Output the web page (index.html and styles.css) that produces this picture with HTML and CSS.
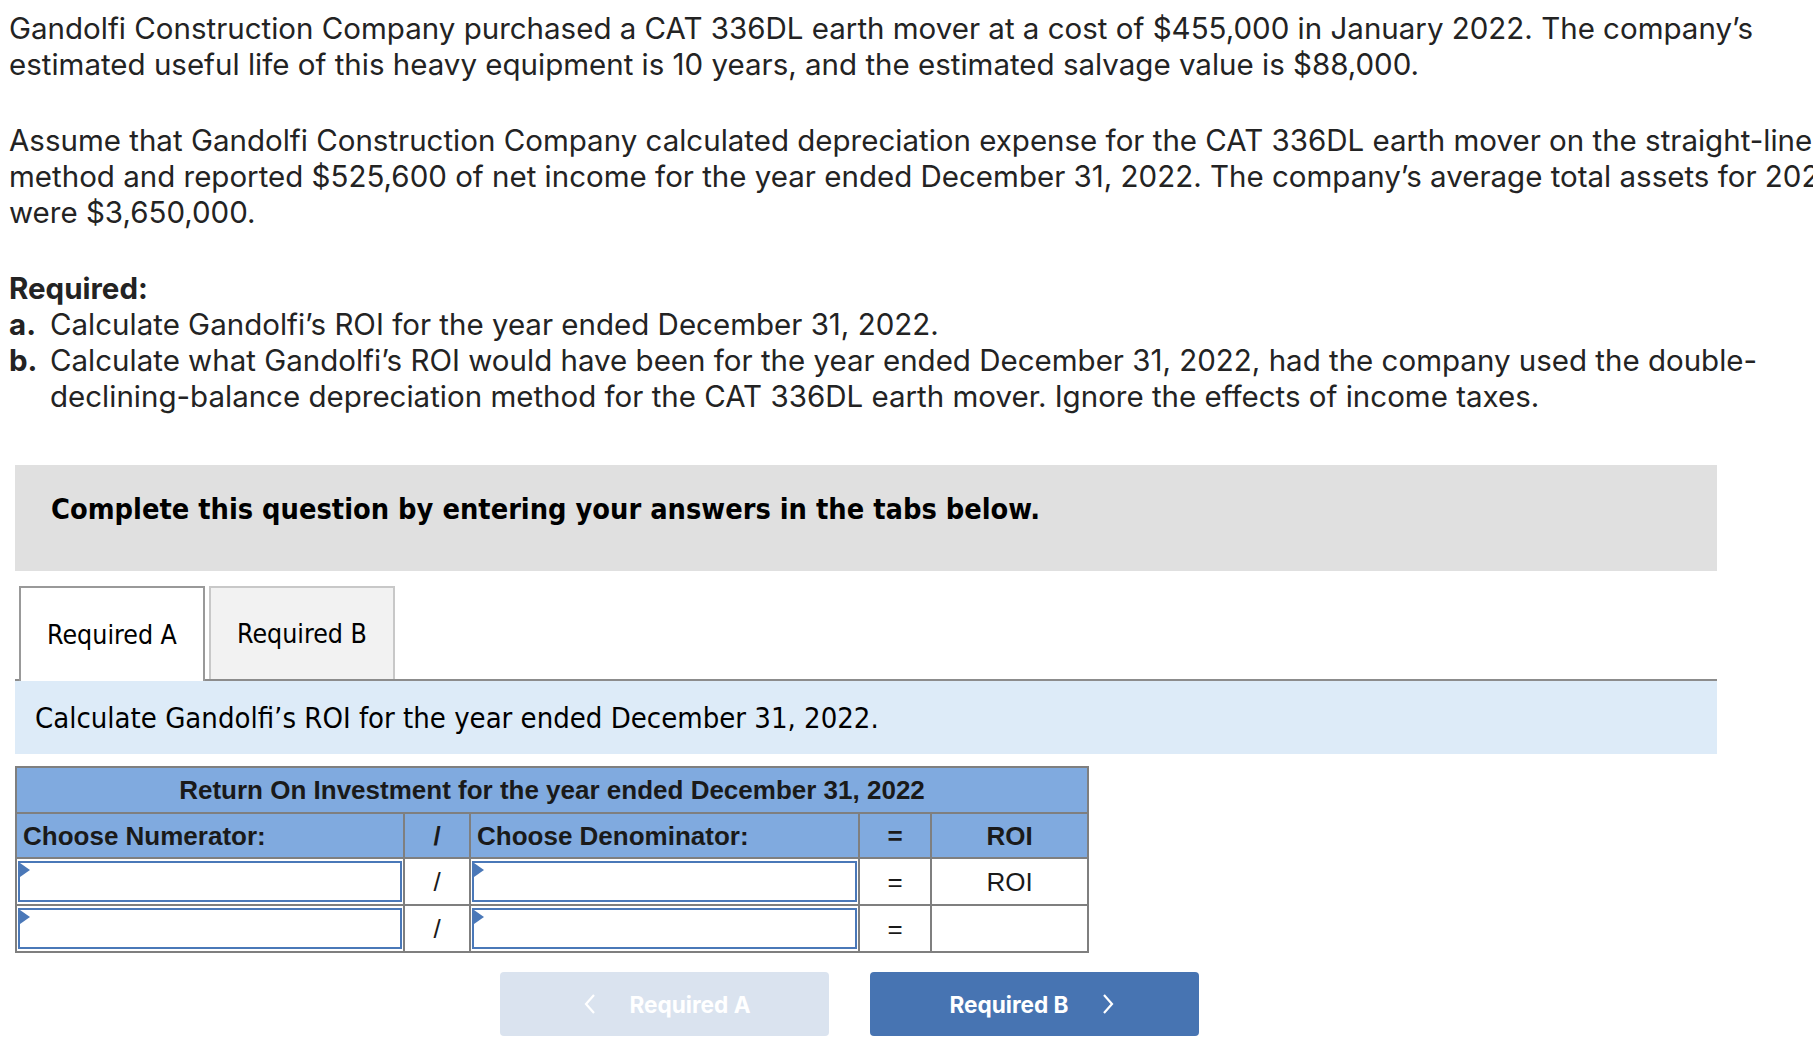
FILE: index.html
```html
<!DOCTYPE html>
<html lang="en">
<head>
<meta charset="utf-8">
<title>ROI question</title>
<link rel="stylesheet" href="styles.css">
</head>
<body>
<div class="page">
  <section class="question">
    <p class="para">Gandolfi Construction Company purchased a CAT 336DL earth mover at a cost of $455,000 in January 2022. The company’s estimated useful life of this heavy equipment is 10 years, and the estimated salvage value is $88,000.</p>
    <p class="para">Assume that Gandolfi Construction Company calculated depreciation expense for the CAT 336DL earth mover on the straight-line method and reported $525,600 of net income for the year ended December 31, 2022. The company’s average total assets for 2022 were $3,650,000.</p>
    <p class="req-title">Required:</p>
    <ul class="req-list">
      <li><span class="lbl">a.</span><span>Calculate Gandolfi’s ROI for the year ended December 31, 2022.</span></li>
      <li><span class="lbl">b.</span><span>Calculate what Gandolfi’s ROI would have been for the year ended December 31, 2022, had the company used the double-declining-balance depreciation method for the CAT 336DL earth mover. Ignore the effects of income taxes.</span></li>
    </ul>
  </section>

  <section class="work">
    <div class="instructions">Complete this question by entering your answers in the tabs below.</div>

    <div class="tabs">
      <div class="tab tab-active">Required A</div>
      <div class="tab tab-idle">Required B</div>
    </div>

    <div class="tab-desc">Calculate Gandolfi’s ROI for the year ended December 31, 2022.</div>

    <table class="roi">
      <colgroup>
        <col class="c-num"><col class="c-op"><col class="c-den"><col class="c-eq"><col class="c-roi">
      </colgroup>
      <tr class="row-title"><th colspan="5">Return On Investment for the year ended December 31, 2022</th></tr>
      <tr class="row-head">
        <th class="left">Choose Numerator:</th>
        <th>/</th>
        <th class="left">Choose Denominator:</th>
        <th>=</th>
        <th>ROI</th>
      </tr>
      <tr class="row-body">
        <td class="in"><div class="field"><span class="flag"></span></div></td>
        <td>/</td>
        <td class="in"><div class="field"><span class="flag"></span></div></td>
        <td>=</td>
        <td>ROI</td>
      </tr>
      <tr class="row-body">
        <td class="in"><div class="field"><span class="flag"></span></div></td>
        <td>/</td>
        <td class="in"><div class="field"><span class="flag"></span></div></td>
        <td>=</td>
        <td></td>
      </tr>
    </table>

    <div class="nav">
      <button class="nav-btn nav-prev" type="button">
        <svg class="chev" width="12" height="22" viewBox="0 0 12 22"><path d="M10 2 L2 11 L10 20" fill="none" stroke="#fff" stroke-width="2.2"/></svg>
        <span>Required A</span>
      </button>
      <button class="nav-btn nav-next" type="button">
        <span>Required B</span>
        <svg class="chev" width="12" height="22" viewBox="0 0 12 22"><path d="M2 2 L10 11 L2 20" fill="none" stroke="#fff" stroke-width="2.2"/></svg>
      </button>
    </div>
  </section>
</div>
</body>
</html>
```

FILE: styles.css
```css
html, body {
  margin: 0;
  padding: 0;
  background: #fff;
}
body {
  overflow-x: hidden;
}
.page {
  padding: 10px 0 0 9px;
}
.question {
  width: 1856px;
  font-family: "Inter", "Lato", sans-serif;
  font-size: 29.5px;
  line-height: 36px;
  color: #232323;
}
.para {
  margin: 0 0 40px 0;
}
.req-title {
  margin: 0;
  font-weight: 700;
}
.req-list {
  list-style: none;
  margin: 0;
  padding: 0;
}
.req-list li {
  display: flex;
}
.req-list .lbl {
  flex: 0 0 41px;
  font-weight: 700;
}

.work {
  margin: 51px 0 0 6px;
  width: 1702px;
}
.instructions {
  background: #e0e0e0;
  padding: 30px 36px 48px;
  font-family: "DejaVu Sans Condensed", "DejaVu Sans", sans-serif;
  font-weight: 700;
  font-size: 28.7px;
  line-height: 28px;
  color: #000;
}
.tabs {
  display: flex;
  align-items: flex-end;
  gap: 4px;
  margin-top: 15px;
  padding-left: 4px;
  border-bottom: 2px solid #8c8c8c;
  font-family: "DejaVu Sans Condensed", "DejaVu Sans", sans-serif;
  font-size: 26.5px;
  color: #000;
}
.tab {
  box-sizing: border-box;
  width: 186px;
  display: flex;
  align-items: center;
  justify-content: center;
}
.tab-active {
  height: 95px;
  margin-bottom: -2px;
  background: #fff;
  border: 2px solid #999;
  border-bottom: none;
}
.tab-idle {
  height: 93px;
  background: #f2f2f2;
  border: 2px solid #c8c8c8;
  border-bottom: none;
}
.tab-desc {
  height: 73px;
  display: flex;
  align-items: center;
  padding-left: 20px;
  background: #ddebf8;
  font-family: "DejaVu Sans Condensed", "DejaVu Sans", sans-serif;
  font-size: 29px;
  color: #000;
}

.roi {
  margin-top: 12px;
  width: 1072px;
  table-layout: fixed;
  border-collapse: collapse;
  border: 2px solid #7f7f7f;
  font-family: "Liberation Sans", Arial, sans-serif;
  font-size: 26px;
  color: #1a1a1a;
}
.c-num { width: 388px; }
.c-op { width: 66px; }
.c-den { width: 389px; }
.c-eq { width: 72px; }
.c-roi { width: 157px; }
.roi th, .roi td {
  border: 2px solid #7f7f7f;
  padding: 0;
  text-align: center;
  line-height: 30px;
}
.roi th {
  background: #80aadf;
  font-weight: 700;
}
.roi th.left {
  text-align: left;
  padding-left: 6px;
}
.row-title th {
  height: 44px;
}
.row-head th {
  height: 43px;
}
.row-body td {
  height: 43px;
  background: #fff;
}
.roi td.in {
  padding: 1px;
}
.field {
  position: relative;
  box-sizing: border-box;
  height: 41px;
  border: 2px solid #4a78b8;
  background: #fff;
}
.flag {
  position: absolute;
  left: 0;
  top: 0;
  width: 0;
  height: 0;
  border-left: 10px solid #4a78b8;
  border-top: 7px solid transparent;
  border-bottom: 7px solid transparent;
}

.nav {
  width: 1668px;
  margin-top: 19px;
  display: flex;
  justify-content: center;
  gap: 41px;
}
.nav-btn {
  box-sizing: border-box;
  width: 329px;
  height: 64px;
  border: none;
  border-radius: 4px;
  display: flex;
  align-items: center;
  justify-content: center;
  gap: 33px;
  font-family: "Inter", "Lato", sans-serif;
  font-weight: 700;
  font-size: 22.6px;
  color: #fff;
  padding: 0;
}
.nav-prev {
  background: #dae3ef;
  padding-left: 7px;
}
.nav-next {
  background: #4774b2;
  padding-right: 5px;
}
.chev {
  display: block;
}
```
